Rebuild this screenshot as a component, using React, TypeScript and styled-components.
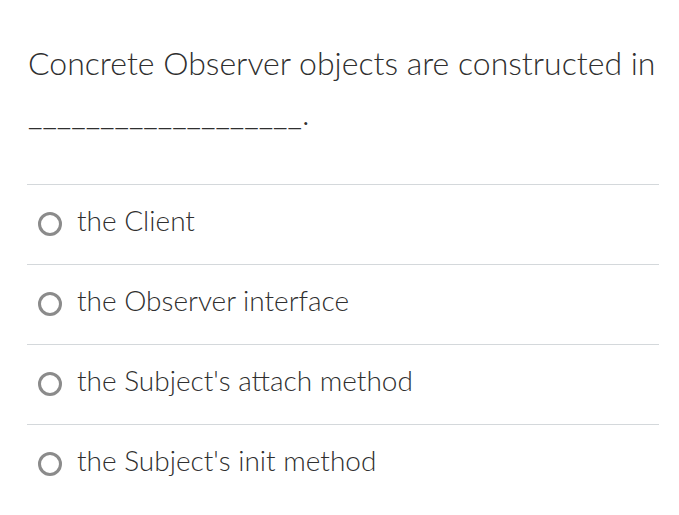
import React from 'react';
import styled, { createGlobalStyle } from 'styled-components';

const GlobalStyle = createGlobalStyle`
  html, body {
    margin: 0;
    padding: 0;
    background: #ffffff;
  }
  body {
    font-family: Lato, "Open Sans", sans-serif;
    color: #2f2f2f;
  }
`;

const Wrapper = styled.div`
  padding: 38px 20px 0 27px;
  width: 632px;
`;

const Question = styled.div`
  font-size: 32px;
  font-weight: 300;
  line-height: 50px;
  margin: 0 0 46px 1px;
  color: #2f2f2f;
`;

const AnswerList = styled.div`
  display: flex;
  flex-direction: column;
`;

const AnswerRow = styled.label`
  box-sizing: border-box;
  display: flex;
  align-items: center;
  gap: 15px;
  height: 80px;
  padding: 0 0 10px 11px;
  border-top: 1px solid #d4d8db;
  cursor: pointer;
`;

const Radio = styled.span`
  box-sizing: border-box;
  width: 24px;
  height: 24px;
  border-radius: 50%;
  border: 3px solid #8b8b8b;
  flex-shrink: 0;
  margin-top: 8px;
`;

const AnswerText = styled.span`
  font-size: 28px;
  font-weight: 300;
  line-height: 1;
  color: #2f2f2f;
`;

const answers = [
  'the Client',
  'the Observer interface',
  "the Subject's attach method",
  "the Subject's init method",
];

const App = () => (
  <>
    <GlobalStyle />
    <Wrapper>
      <Question>
        Concrete Observer objects are constructed in
        <br />
        ___________________.
      </Question>
      <AnswerList>
        { answers.map((answer) => (
          <AnswerRow key={ answer }>
            <Radio />
            <AnswerText>{ answer }</AnswerText>
          </AnswerRow>
        )) }
      </AnswerList>
    </Wrapper>
  </>
);

export default App;
